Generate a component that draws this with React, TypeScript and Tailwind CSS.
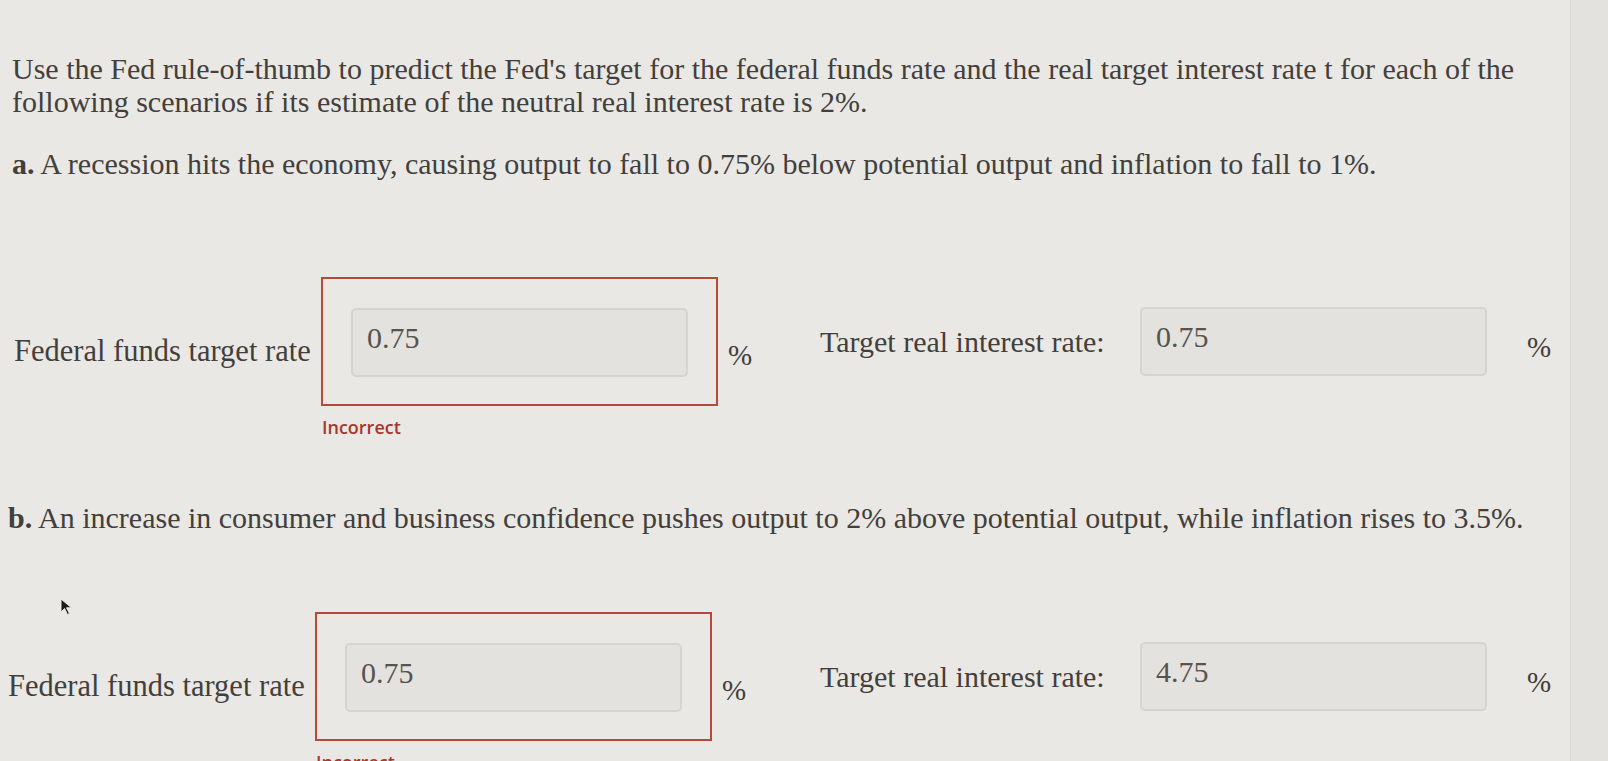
const serif = "font-['Liberation_Serif','Times_New_Roman',serif]";

const field =
  "h-[69px] rounded-[5px] border-2 border-[#d6d4d0] bg-[#e4e2de] px-[14px] pt-[11px] text-[30px] leading-[34px] text-[#57544f]";

function Row({ pad, gap, fed, real }: { pad: string; gap: string; fed: string; real: string }) {
  return (
    <div className={`flex items-center ${pad}`}>
      <div className="w-[307px] shrink-0 pt-[19px] text-[30.5px] leading-[33px]">Federal funds target rate</div>
      <div className="shrink-0 border-2 border-[#b8473c] px-[28px] pt-[29px] pb-[27px]">
        <div className={`w-[337px] ${field}`}>{fed}</div>
      </div>
      <div className={`${gap} shrink-0 pl-[10px] pt-[28px] text-[29px]`}>%</div>
      <div className="w-[320px] shrink-0 text-[30px] leading-[33px]">Target real interest rate:</div>
      <div className={`w-[347px] shrink-0 ${field}`}>{real}</div>
      <div className="pl-[40px] pt-[12px] text-[29px]">%</div>
    </div>
  );
}

export default function App() {
  return (
    <div className={`relative flex h-[761px] w-[1608px] overflow-hidden bg-[#eae8e4] text-[#423f3c] ${serif}`}>
      <main className="flex-1 pt-[52px]">
        <div className="pl-[12px] text-[30px] leading-[33px]">
          <p>Use the Fed rule-of-thumb to predict the Fed's target for the federal funds rate and the real target interest rate t for each of the</p>
          <p>following scenarios if its estimate of the neutral real interest rate is 2%.</p>
          <p className="mt-[29px]">
            <span className="font-bold">a.</span> A recession hits the economy, causing output to fall to 0.75% below potential output and inflation to fall to 1%.
          </p>
        </div>

        <div className="mt-[97px]">
          <Row pad="pl-[14px]" gap="w-[102px]" fed="0.75" real="0.75" />
          <p className="ml-[322px] mt-[9px] font-['Open_Sans',sans-serif] text-[18px] font-semibold leading-[24px] text-[#a5382d]">Incorrect</p>
        </div>

        <p className="mt-[62px] pl-[8px] text-[30px] leading-[33px]">
          <span className="font-bold">b.</span> An increase in consumer and business confidence pushes output to 2% above potential output, while inflation rises to 3.5%.
        </p>

        <div className="mt-[78px]">
          <Row pad="pl-[8px]" gap="w-[108px]" fed="0.75" real="4.75" />
          <p className="ml-[316px] mt-[9px] font-['Open_Sans',sans-serif] text-[18px] font-semibold leading-[24px] text-[#a5382d]">Incorrect</p>
        </div>
      </main>
      <aside className="w-[38px] shrink-0 border-l border-[#d9d7d3] bg-[#e4e2de]" />

      <svg className="absolute left-[60px] top-[598px]" width="14" height="18" viewBox="0 0 14 18">
        <path d="M1 1 L1 14 L4.5 10.5 L7.5 16.5 L9.5 15.5 L6.5 9.8 L11.5 9.8 Z" fill="#1f1d1c" stroke="#eae8e4" strokeWidth="1" />
      </svg>
    </div>
  );
}
